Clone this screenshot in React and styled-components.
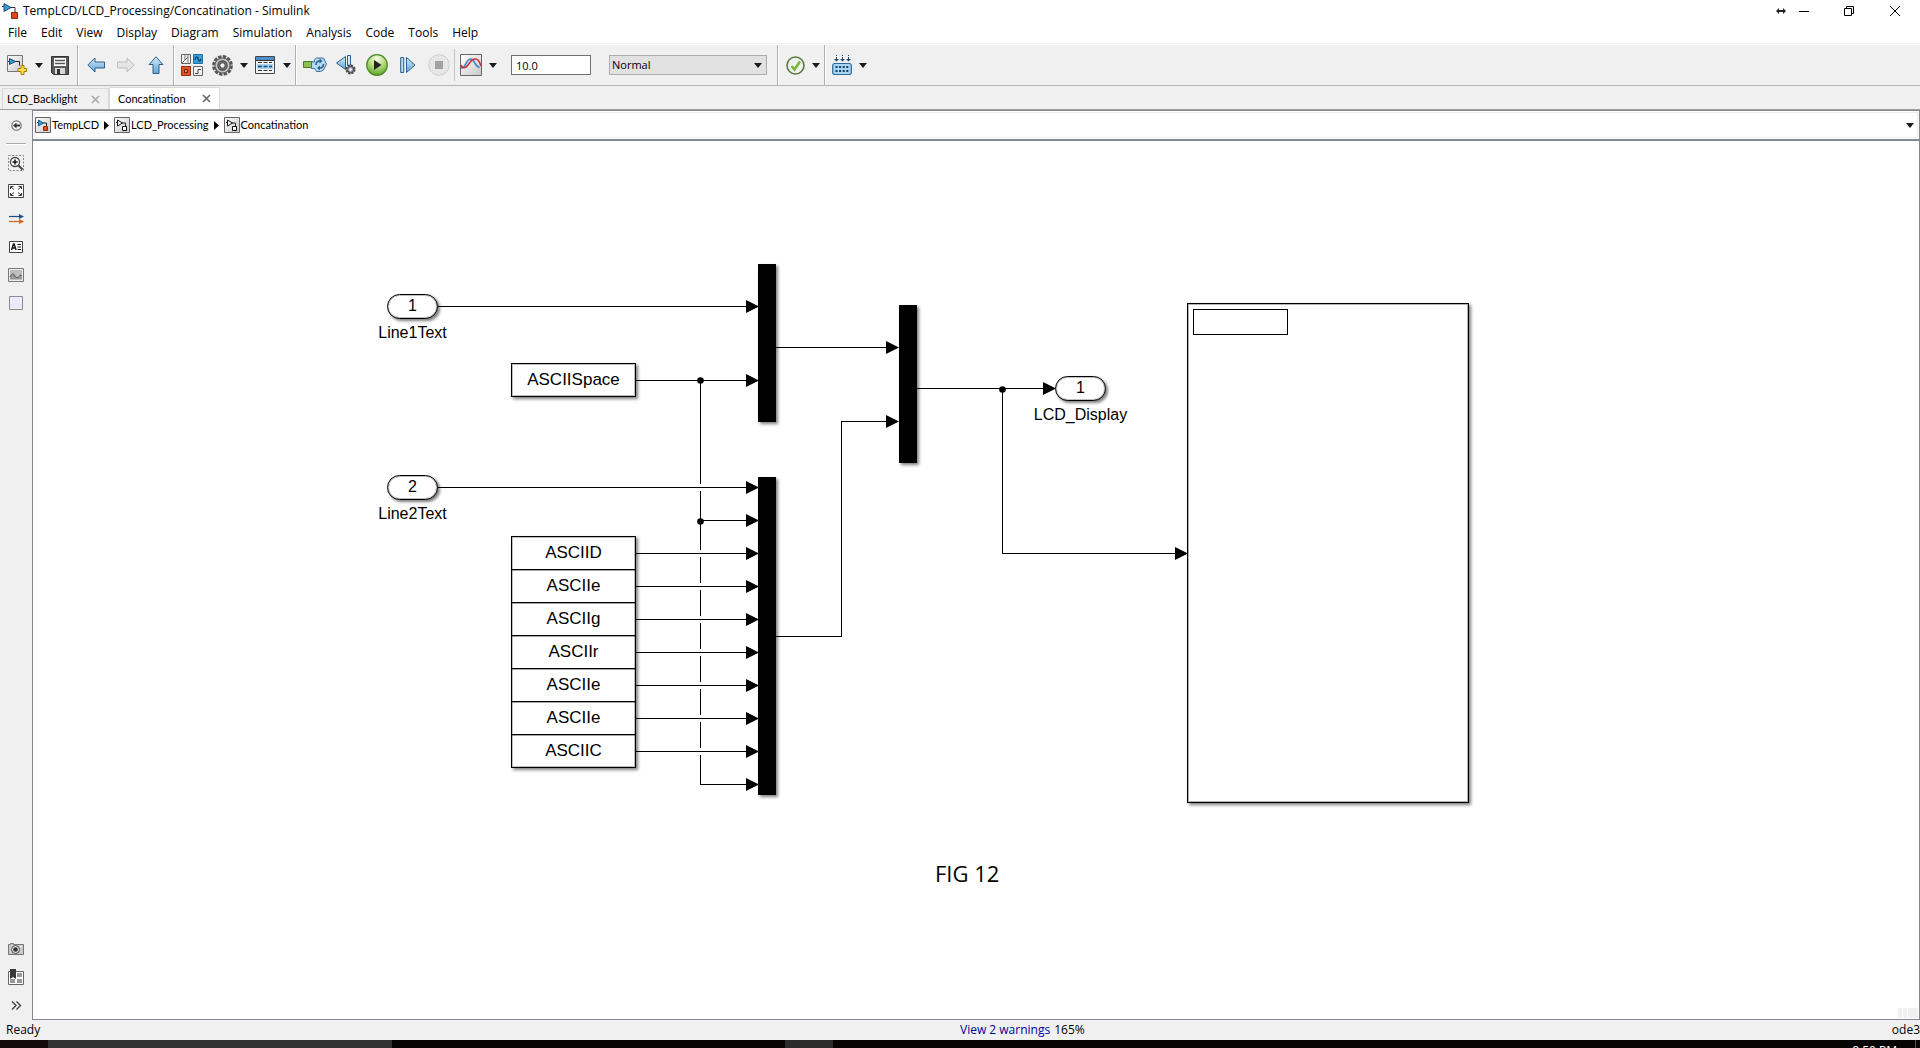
import React, { useState } from 'react';

import styled, { createGlobalStyle } from 'styled-components';

const GlobalStyle = createGlobalStyle`
  * {
    box-sizing: border-box;
  }
  body {
    margin: 0;
    overflow: hidden;
    background: #f0f0f0;
    color: #000;
    font-family: 'Open Sans', sans-serif;
    font-size: 12px;
    line-height: 16px;
  }
  button, input, select {
    font: inherit;
    color: inherit;
  }
  svg {
    display: block;
  }
`;

const Window = styled.div`
  display: flex;
  flex-direction: column;
  height: 100vh;
  white-space: nowrap;
`;

const PlainButton = styled.button`
  display: flex;
  align-items: center;
  justify-content: center;
  padding: 0;
  border: none;
  background: none;
`;

const TitleBar = styled.header`
  display: flex;
  align-items: center;
  height: 22px;
  padding-left: 2px;
  background: #fff;
`;

const Title = styled.h1`
  flex: 1;
  margin: 0 0 0 5px;
  font-size: 12px;
  font-weight: 400;
`;

const WindowButton = styled(PlainButton)`
  width: ${(props) => props.$w}px;
  height: 20px;
`;

const MinimizeButton = styled(WindowButton)`
  margin-right: 9px;
`;

const MenuBar = styled.nav`
  display: flex;
  height: 22px;
  padding-left: 1px;
  background: #fff;
  border-bottom: 1px solid #f0f0f0;
`;

const MenuItem = styled(PlainButton)`
  padding: 0 7px;
  height: 21px;
`;

const ToolBar = styled.div`
  display: flex;
  height: 42px;
  border-top: 1px solid #fff;
  border-bottom: 1px solid #b4b4b4;
`;

const ToolGroup = styled.div`
  display: flex;
  align-items: center;
  padding: 0 2px 0 3px;
  border-right: ${(props) => (props.$last ? 'none' : '1px solid #b0b0b0')};
  box-shadow: ${(props) => (props.$last ? 'none' : '1px 0 #fff')};

  &:first-child {
    padding-left: 2px;
  }
`;

const ToolButton = styled(PlainButton)`
  width: ${(props) => props.$w || 30}px;
  height: 30px;
`;

const ToolDivider = styled.div`
  width: 1px;
  height: 32px;
  background: #c4c4c4;
`;

const StopTime = styled.input`
  width: 80px;
  height: 20px;
  margin: 0 18px 0 12px;
  padding: 0 4px;
  border: 1px solid #707070;
  border-radius: 0;
  background: #fff;
  font-size: 11px;
`;

const ModeBox = styled.div`
  display: grid;
  align-items: center;
  width: 158px;
  margin-right: 8px;

  & > * {
    grid-area: 1 / 1;
  }
  svg {
    justify-self: end;
    margin-right: 5px;
    pointer-events: none;
  }
`;

const ModeSelect = styled.select`
  appearance: none;
  height: 20px;
  padding: 0 2px;
  border: 1px solid #adadad;
  border-radius: 0;
  background: #e1e1e1;
  font-size: 11px;
`;

const TabBar = styled.div`
  display: flex;
  align-items: flex-end;
  height: 23px;
  padding-left: 2px;
`;

const Tab = styled.div`
  display: flex;
  align-items: center;
  justify-content: space-between;
  width: ${(props) => (props.$active ? 111 : 107)}px;
  height: ${(props) => (props.$active ? 22 : 21)}px;
  padding: 0 6px 0 ${(props) => (props.$active ? 8 : 4)}px;
  border: 1px solid #d9d9d9;
  border-bottom: none;
  background: ${(props) => (props.$active ? '#fff' : '#f0f0f0')};
`;

const TabLabel = styled(PlainButton)`
  height: 20px;
  font-family: Lato, sans-serif;
  font-size: 11px;
`;

const TabClose = styled(PlainButton)`
  width: 14px;
  height: 14px;
`;

const Workspace = styled.div`
  display: flex;
  flex: 1;
  min-height: 0;
  border-top: 1px solid #a0a0a0;
`;

const Palette = styled.aside`
  display: flex;
  flex-direction: column;
  width: 32px;
  padding: 1px 0;
`;

const PaletteButton = styled(PlainButton)`
  width: 32px;
  height: 28px;
`;

const PaletteDivider = styled.div`
  height: 2px;
  margin: 4px 6px;
  border-top: 1px solid #a8a8a8;
  border-bottom: 1px solid #fff;
`;

const Spacer = styled.div`
  flex: 1;
`;

const Editor = styled.main`
  display: flex;
  flex-direction: column;
  flex: 1;
  min-width: 0;
  border: 1px solid #828790;
`;

const Breadcrumbs = styled.div`
  display: flex;
  align-items: center;
  height: 30px;
  border-bottom: 2px solid #828790;
  background: #fff;
`;

const CrumbTrail = styled.div`
  display: flex;
  flex: 1;
  align-items: center;
  height: 26px;
  margin: 1px;
  border: 1px solid #ececec;
`;

const Crumb = styled.a`
  display: flex;
  align-items: center;
  gap: 1px;
  color: #000;
  font-family: Lato, sans-serif;
  font-size: 11px;
  text-decoration: none;
`;

const CrumbArrow = styled.svg`
  margin: 0 5px;
`;

const CrumbMenu = styled(PlainButton)`
  width: 14px;
  height: 20px;
  margin-left: auto;
`;

const Canvas = styled.div`
  position: relative;
  flex: 1;
  overflow: hidden;
  background: #fff;
  font-family: 'Liberation Sans', Arial, sans-serif;
`;

const Wires = styled.svg`
  position: absolute;
  left: 0;
  top: 0;
  width: 100%;
  height: 100%;
`;

const Node = styled.div`
  position: absolute;
  left: ${(props) => props.$x}px;
  top: ${(props) => props.$y}px;
`;

const PortNode = styled(Node)`
  display: flex;
  flex-direction: column;
  align-items: center;
  width: 51px;
  font-size: 16px;
`;

const PortShape = styled.div`
  width: 51px;
  height: 25px;
  border: 1px solid #000;
  border-radius: 13px;
  box-shadow: 2px 2px 3px rgba(0, 0, 0, 0.5), inset 0 0 0 1px rgba(0, 0, 0, 0.25);
  background: #fff;
  line-height: 22px;
  text-align: center;
`;

const PortName = styled.div`
  margin-top: 4px;
  line-height: 20px;
`;

const Mux = styled(Node)`
  width: 18px;
  height: ${(props) => props.$h}px;
  background: #000;
  box-shadow: 2px 2px 3px rgba(0, 0, 0, 0.5);
`;

const ConstantStack = styled(Node)`
  width: 125px;
  border: 1px solid #000;
  box-shadow: 2px 2px 3px rgba(0, 0, 0, 0.5), inset 0 0 0 1px rgba(0, 0, 0, 0.25);
  font-size: 17px;
  line-height: 31px;
  text-align: center;
`;

const Constant = styled.div`
  height: 33px;
  border-bottom: 1px solid #000;
  box-shadow: 0 1px rgba(0, 0, 0, 0.35);

  &:last-child {
    height: 32px;
    border-bottom: none;
    box-shadow: none;
  }
`;

const Display = styled(Node)`
  width: 282px;
  height: 500px;
  padding: 5px;
  border: 1px solid #000;
  box-shadow: 2px 2px 3px rgba(0, 0, 0, 0.5), inset 0 0 0 1px rgba(0, 0, 0, 0.3);
`;

const DisplayValue = styled.div`
  width: 95px;
  height: 26px;
  border: 1px solid #000;
`;

const Caption = styled(Node)`
  font-family: 'Open Sans', sans-serif;
  font-size: 22px;
  line-height: 28px;
`;

const Grip = styled.div`
  position: absolute;
  right: 1px;
  bottom: 1px;
  display: flex;
  gap: 1px;
`;

const GripCell = styled.div`
  width: ${(props) => props.$w}px;
  height: 10px;
  background: #f0f0f0;
`;

const StatusBar = styled.footer`
  display: grid;
  grid-template-columns: 1fr 1fr;
  align-items: center;
  height: 20px;
`;

const StatusText = styled.div`
  padding-left: 6px;
`;

const StatusDetails = styled.div`
  display: flex;
  gap: 4px;
`;

const WarningLink = styled.a`
  color: #00009c;
  text-decoration: none;
`;

const Solver = styled.div`
  margin-left: auto;
`;

const TaskBar = styled.div`
  display: flex;
  height: 8px;
  overflow: hidden;
  background: #060504;
  color: #fff;
`;

const TaskSlot = styled.div`
  width: ${(props) => props.$w}px;
  background: ${(props) => props.$bg};
`;

const Clock = styled.div`
  margin: 3px 18px 0 auto;
`;

const DesktopEdge = styled.div`
  width: 5px;
  border-left: 1px solid #555;
`;

/* icons */

const Caret = () => (
  <svg width="8" height="5" viewBox="0 0 8 5">
    <path d="M0 0h8L4 5z" fill="#1a1a1a" />
  </svg>
);

const CloseIcon = ({ color }) => (
  <svg width="9" height="9" viewBox="0 0 9 9">
    <path d="M1 1l7 7M8 1l-7 7" stroke={color} strokeWidth="1.6" />
  </svg>
);

const AppIcon = () => (
  <svg width="16" height="16" viewBox="0 0 16 16">
    <path d="M0 3.500h2M8 4.500h5v5" stroke="#333" fill="none" />
    <path d="M2 0.500v8l7-4z" fill="#3f9bd8" stroke="#124a78" />
    <path d="M9.500 9.500h6v6h-6z" fill="#dd4a22" stroke="#8a2a10" />
  </svg>
);

const ModelIcon = ({ colored }) => (
  <svg width="16" height="16" viewBox="0 0 16 16">
    <defs>
      <linearGradient id="paper" x1="0" y1="0" x2="1" y2="1">
        <stop offset="0" stopColor="#fff" />
        <stop offset="1" stopColor="#c8c8c8" />
      </linearGradient>
    </defs>
    <path d="M.5.5h15v15H.5z" fill="url(#paper)" stroke="#666" />
    <path d="M2 5.500h2M8 6h3.500v3" stroke="#222" fill="none" />
    <path d="M3.500 3v6l5-3z" fill={colored ? '#3f9bd8' : '#fff'} stroke={colored ? '#1b5d90' : '#111'} />
    <path d="M8.500 9.500h4v4h-4z" fill={colored ? '#dd4a22' : '#fff'} stroke={colored ? '#9a3010' : '#111'} />
  </svg>
);

const NewIcon = () => (
  <svg width="20" height="20" viewBox="0 0 20 20">
    <path d="M.5.5h15v16H.5z" fill="url(#paper)" stroke="#777" />
    <path d="M1 6.500h2M8 6.500h4.500v4" stroke="#222" fill="none" />
    <path d="M2.500 3.500v6L8.500 6.500z" fill="#3f9bd8" stroke="#124a78" />
    <path d="M14.500 10.500h2.500v3h2.500v3h-2.500v3h-3v-3h-3v-3h3v-3z" fill="#ffe04a" stroke="#a67c00" />
  </svg>
);

const SaveIcon = () => (
  <svg width="18" height="19" viewBox="0 0 18 19">
    <path d="M.5.5h17v18H2.500l-2-2z" fill="#5a5a5a" stroke="#333" />
    <path d="M3 2h12v8H3z" fill="#fff" />
    <path d="M4 4.500h10M4 7.500h10" stroke="#555" strokeWidth="1.400" />
    <path d="M4 12h10v6H4z" fill="#d8d8d8" />
    <path d="M6 13h3v5H6z" fill="#333" />
  </svg>
);

const BlueGradient = () => (
  <linearGradient id="blue" x1="0" y1="0" x2="0" y2="1">
    <stop offset="0" stopColor="#d4ecfb" />
    <stop offset="1" stopColor="#5ea2d6" />
  </linearGradient>
);

const BackIcon = () => (
  <svg width="18" height="16" viewBox="0 0 18 16">
    <defs>
      <BlueGradient />
    </defs>
    <path d="M.8 8l7.200-7v4h9.500v6H8v4z" fill="url(#blue)" stroke="#2c5f8c" />
  </svg>
);

const ForwardIcon = () => (
  <svg width="18" height="16" viewBox="0 0 18 16">
    <path d="M17.200 8L10 1v4H.5v6H10v4z" fill="#e4e4e4" stroke="#bdbdbd" />
  </svg>
);

const UpIcon = () => (
  <svg width="16" height="18" viewBox="0 0 16 18">
    <path d="M8 .8l7 7.700h-4v9H5v-9H1z" fill="url(#blue)" stroke="#2c5f8c" />
  </svg>
);

const LibraryIcon = () => (
  <svg width="22" height="22" viewBox="0 0 22 22">
    <path d="M.5.5h9v9h-9z" fill="#f4f4f4" stroke="#666" />
    <path d="M1 9l3-3V1M4 6l3-3V1M7 3v6" stroke="#777" fill="none" />
    <path d="M12.500.5h9v9h-9z" fill="#35a3e0" stroke="#1b6fa5" />
    <path d="M14 6c1-4 2.500-4 3.200-1s2 3 2.800 0" stroke="#063f6b" strokeWidth="1.300" fill="none" />
    <path d="M.5 12.500h9v9h-9z" fill="#e0502a" stroke="#97300f" />
    <path d="M3.500 15.500h3v3h-3z" fill="#f38a66" stroke="#6e1d05" />
    <path d="M12.500 12.500h9v9h-9z" fill="#f4f4f4" stroke="#666" />
    <path d="M14 19.500h3v-4h3" stroke="#444" fill="none" />
  </svg>
);

const GearIcon = () => (
  <svg width="21" height="21" viewBox="0 0 20 20">
    <circle cx="10" cy="10" r="8.600" fill="none" stroke="#555" strokeWidth="2.600" strokeDasharray="3.300 1.200" />
    <circle cx="10" cy="10" r="7.200" fill="#c4c4c4" stroke="#5a5a5a" />
    <circle cx="10" cy="10" r="4.400" fill="#8c8c8c" stroke="#3a3a3a" />
    <circle cx="10" cy="10" r="2.600" fill="#f4f4f4" stroke="#444" />
  </svg>
);

const ExplorerIcon = () => (
  <svg width="20" height="18" viewBox="0 0 20 18">
    <path d="M.5.5h19v17H.5z" fill="#f4f4f4" stroke="#444" />
    <path d="M1 1h18v3H1z" fill="#4b8ec6" />
    <path d="M1 4.500h18" stroke="#333" />
    <path d="M2 8h16v5H2z" fill="#a9d2ee" />
    <path d="M3 6.500h4M8.500 6.500h4M14 6.500h3M3 14.500h4M8.500 14.500h4M14 14.500h3" stroke="#333" />
    <path d="M3 10.500h4M8.500 10.500h4M14 10.500h3" stroke="#124a78" strokeWidth="1.400" />
  </svg>
);

const UpdateIcon = () => (
  <svg width="24" height="18" viewBox="0 0 24 18">
    <path d="M.5 5.500h9v6h-9z" fill="#8cc152" stroke="#4b7a1f" />
    <path d="M8.500 6h3V3.500l2-1.500h7l3 6-3 6-3 1.500h-4l-2-3h-3z" fill="#b5d9f1" stroke="#3a73a3" />
    <path d="M13 9c0-3 1.500-4 4-4M20.500 8c0 3-1.500 4-4 4" stroke="#28618f" strokeWidth="1.600" fill="none" />
    <path d="M16.500 2.500l3 2.500-3 2.500zM17 9.500L14 12l3 2.500z" fill="#28618f" />
  </svg>
);

const StepBackIcon = () => (
  <svg width="20" height="20" viewBox="0 0 20 20">
    <path d="M9.500 1.500v13l-9-6.500z" fill="url(#blue)" stroke="#2c5f8c" />
    <path d="M11.500 .5h3v10h-3z" fill="#d4ecfb" stroke="#2c5f8c" />
    <circle cx="14.500" cy="14.500" r="4" fill="#aaa" stroke="#444" strokeWidth="2" strokeDasharray="2 1.140" />
    <circle cx="14.500" cy="14.500" r="3" fill="#aaa" stroke="#444" />
    <circle cx="14.500" cy="14.500" r="1.200" fill="#fff" />
  </svg>
);

const RunIcon = () => (
  <svg width="22" height="22" viewBox="0 0 22 22">
    <defs>
      <radialGradient id="green" cx=".5" cy=".2" r=".8">
        <stop offset="0" stopColor="#f4fbe8" />
        <stop offset=".5" stopColor="#b4dc7e" />
        <stop offset="1" stopColor="#5ea52a" />
      </radialGradient>
    </defs>
    <circle cx="11" cy="11" r="10.300" fill="url(#green)" stroke="#4b8a20" strokeWidth="1.200" />
    <path d="M8 6v10l7.500-5z" fill="#222" />
  </svg>
);

const StepIcon = () => (
  <svg width="16" height="18" viewBox="0 0 16 18">
    <path d="M.7 1.500h3v15h-3z" fill="#b9dcf3" stroke="#2c5f8c" />
    <path d="M6.500 1.500v15l8.500-7.500z" fill="url(#blue)" stroke="#2c5f8c" />
  </svg>
);

const StopIcon = () => (
  <svg width="22" height="22" viewBox="0 0 22 22">
    <circle cx="11" cy="11" r="10.300" fill="#e6e6e6" stroke="#cfcfcf" />
    <path d="M7 7h8v8H7z" fill="#a2a2a2" />
  </svg>
);

const ScopeIcon = () => (
  <svg width="22" height="22" viewBox="0 0 22 22">
    <path d="M.5.500h21v21H.5z" fill="url(#paper)" stroke="#666" />
    <path d="M1 14c5 0 5-9 9.500-9s4 8 9 8.500" stroke="#3f86c4" strokeWidth="1.600" fill="none" />
    <path d="M1 11c1.500 4 4.500 3.500 7 0s4-6.500 8-6c3 .5 4 4 5 7" stroke="#c8323c" strokeWidth="1.600" fill="none" />
  </svg>
);

const CheckIcon = () => (
  <svg width="19" height="19" viewBox="0 0 19 19">
    <circle cx="9.500" cy="9.500" r="8.500" fill="#f0f0f0" stroke="#5b7a3a" strokeWidth="1.600" />
    <path d="M5.500 10l3 3.500 5.500-8" stroke="#7db53a" strokeWidth="2.600" fill="none" />
  </svg>
);

const BuildIcon = () => (
  <svg width="20" height="20" viewBox="0 0 20 20">
    <path d="M4.500 0v1M4.500 2v3M10.500 0v1M10.500 2v3M16.500 0v1M16.500 2v3" stroke="#1c4a75" />
    <path d="M2 4h5L4.500 6.500zM8 4h5l-2.500 2.500zM14 4h5l-2.500 2.500z" fill="#1c4a75" />
    <rect x=".7" y="8.500" width="18.600" height="11" rx="2" fill="#a9d5f3" stroke="#2f6a9c" strokeWidth="1.200" />
    <path d="M3.500 12h14M3.500 16h14" stroke="#123f66" strokeWidth="2" strokeDasharray="2 1.600" />
  </svg>
);

const HideIcon = () => (
  <svg width="11" height="11" viewBox="0 0 11 11">
    <circle cx="5.500" cy="5.500" r="4.700" fill="#fafafa" stroke="#777" strokeWidth="1.200" />
    <path d="M2 5.500L5.500 2.500V4.500H9v2H5.500v2z" fill="#333" />
  </svg>
);

const ZoomIcon = () => (
  <svg width="16" height="16" viewBox="0 0 16 16">
    <path d="M.5.500h15v15H.5z" fill="none" stroke="#888" strokeDasharray="2 1.500" />
    <circle cx="7" cy="7" r="4.500" fill="#fff" stroke="#444" strokeWidth="1.300" />
    <path d="M4.500 7h5M7 4.500v5" stroke="#111" strokeWidth="1.500" />
    <path d="M10.500 10.500l4 4" stroke="#444" strokeWidth="2.200" />
  </svg>
);

const FitIcon = () => (
  <svg width="16" height="14" viewBox="0 0 16 14">
    <path d="M.5.500h15v13H.5z" fill="#fff" stroke="#444" />
    <path d="M2.500 5V2.500H5.500M10.500 2.500h3V5M13.500 9v2.500h-3M5.500 11.500h-3V9M3 3l3 2.500M13 3l-3 2.500M3 11l3-2.500M13 11l-3-2.500" stroke="#333" fill="none" />
  </svg>
);

const SignalIcon = () => (
  <svg width="15" height="10" viewBox="0 0 15 10">
    <path d="M0 2.500h11" stroke="#1f4e80" strokeWidth="1.200" />
    <path d="M10 0l5 2.500L10 5z" fill="#1f4e80" />
    <path d="M0 7.500h11" stroke="#d8641e" strokeWidth="1.200" />
    <path d="M10 5l5 2.500-5 2.500z" fill="#d8641e" />
  </svg>
);

const AnnotationIcon = () => (
  <svg width="14" height="12" viewBox="0 0 14 12">
    <path d="M.5.500h13v11H.5z" fill="#fff" stroke="#444" />
    <path d="M2.500 9l2-6h.6l2 6M3.300 7h3" stroke="#111" strokeWidth="1.400" fill="none" />
    <path d="M8.500 3.500h3.500M8.500 6h3.500M8.500 8.500h3.500" stroke="#111" />
  </svg>
);

const ImageIcon = () => (
  <svg width="16" height="14" viewBox="0 0 16 14">
    <path d="M.5.500h15v13H.5z" fill="#eee" stroke="#777" />
    <path d="M2 2h12v10H2z" fill="#bdbdbd" />
    <path d="M2 9c2-4 3.500-4 5-1s3.500 1.500 4.500 0 1.500-1 2.500 0v3H2z" fill="#9a9a9a" />
    <path d="M2 9c2-4 3.500-4 5-1s3.500 1.500 4.500 0 1.500-1 2.500 0" fill="none" stroke="#555" />
  </svg>
);

const AreaIcon = () => (
  <svg width="14" height="14" viewBox="0 0 14 14">
    <path d="M.5.500h13v13H.5z" fill="#eaeafa" stroke="#8c8c94" />
  </svg>
);

const CameraIcon = () => (
  <svg width="16" height="12" viewBox="0 0 16 12">
    <path d="M.5 1.500h2V.500h3v1h10v10H.5z" fill="#c9c9c9" stroke="#777" />
    <circle cx="7.500" cy="6.500" r="4" fill="#ddd" stroke="#555" />
    <circle cx="7.500" cy="6.500" r="2.300" fill="#333" />
    <path d="M12 3.500h2" stroke="#fff" />
  </svg>
);

const BrowserIcon = () => (
  <svg width="16" height="16" viewBox="0 0 16 16">
    <path d="M.5 2.500h15v13H.5z" fill="#fff" stroke="#666" />
    <path d="M2 10h5v4H2zM9 10h5v4H9zM9 4h5v4H9z" fill="#9a9a9a" />
    <path d="M2 0h6v10L5 8l-3 2z" fill="#3a3a3a" />
  </svg>
);

const MoreIcon = () => (
  <svg width="11" height="9" viewBox="0 0 11 9">
    <path d="M1 .5l4 4-4 4M5.500.500l4 4-4 4" stroke="#444" strokeWidth="1.400" fill="none" />
  </svg>
);

const MENUS = ['File', 'Edit', 'View', 'Display', 'Diagram', 'Simulation', 'Analysis', 'Code', 'Tools', 'Help'];

const CONSTANTS = ['ASCIID', 'ASCIIe', 'ASCIIg', 'ASCIIr', 'ASCIIe', 'ASCIIe', 'ASCIIC'];

const ROWS = [412, 445, 478, 511, 544, 577, 610];

// tip of every arrow head
const ARROWS = [
  [726, 165], [726, 239], [726, 346], [726, 379], [726, 643],
  ...ROWS.map((y) => [726, y]),
  [866, 206], [866, 280], [1023, 247], [1155, 412],
];

const PALETTE = [
  ['Zoom', ZoomIcon],
  ['Fit to view', FitIcon],
  ['Sample time', SignalIcon],
  ['Annotation', AnnotationIcon],
  ['Image', ImageIcon],
  ['Area', AreaIcon],
];

const PALETTE_BOTTOM = [
  ['Screenshot', CameraIcon],
  ['Model browser', BrowserIcon],
  ['More', MoreIcon],
];

function Port({ x, y, number, name }) {
  return (
    <PortNode $x={x} $y={y}>
      <PortShape>{number}</PortShape>
      <PortName>{name}</PortName>
    </PortNode>
  );
}

function Diagram() {
  return (
    <Canvas>
      <Wires>
        <g stroke="#000" fill="none" shapeRendering="crispEdges">
          <path d="M405 165.500h310M603 239.500h112M405 346.500h310M667 379.500h48" />
          {ROWS.map((y) => (
            <path key={y} d={`M603 ${y}.5h112`} />
          ))}
          <path d="M667.500 239v104M667.500 350v59" />
          {ROWS.map((y, i) => (
            <path key={y} d={`M667.500 ${y + 4}V${i === ROWS.length - 1 ? 644 : y + 30}`} />
          ))}
          <path d="M667 643.500h48M743 206.500h112M743 495.500h65.500V280.500H855" />
          <path d="M884 247.500h127M969.500 247v165.500H1143" />
        </g>
        {ARROWS.map(([x, y]) => (
          <path key={`${x}-${y}`} d={`M${x} ${y + 0.5}l-13-6.500v13z`} />
        ))}
        <circle cx="667.500" cy="239.500" r="3.300" />
        <circle cx="667.500" cy="380.500" r="3.300" />
        <circle cx="969.500" cy="248.500" r="3.300" />
      </Wires>
      <Port x={354} y={153} number="1" name="Line1Text" />
      <Port x={354} y={334} number="2" name="Line2Text" />
      <Port x={1022} y={235} number="1" name="LCD_Display" />
      <ConstantStack $x={478} $y={222}>
        <Constant>ASCIISpace</Constant>
      </ConstantStack>
      <ConstantStack $x={478} $y={395}>
        {CONSTANTS.map((name, i) => (
          <Constant key={i}>{name}</Constant>
        ))}
      </ConstantStack>
      <Mux $x={725} $y={123} $h={158} />
      <Mux $x={725} $y={336} $h={318} />
      <Mux $x={866} $y={164} $h={158} />
      <Display $x={1154} $y={162}>
        <DisplayValue />
      </Display>
      <Caption $x={902} $y={718}>FIG 12</Caption>
      <Grip>
        <GripCell $w={4} />
        <GripCell $w={4} />
        <GripCell $w={10} />
      </Grip>
    </Canvas>
  );
}

export default function App() {
  const [stopTime, setStopTime] = useState('10.0');
  const [mode, setMode] = useState('Normal');

  return (
    <Window>
      <GlobalStyle />
      <TitleBar>
        <AppIcon />
        <Title>TempLCD/LCD_Processing/Concatination - Simulink</Title>
        <WindowButton $w={16} aria-label="Resize">
          <svg width="10" height="6" viewBox="0 0 10 6">
            <path d="M0 3l3-3v2h4V0l3 3-3 3V4H3v2z" fill="#222" />
          </svg>
        </WindowButton>
        <MinimizeButton $w={30} aria-label="Minimize">
          <svg width="10" height="1"><path d="M0 .5h10" stroke="#000" /></svg>
        </MinimizeButton>
        <WindowButton $w={42} aria-label="Restore">
          <svg width="10" height="10" viewBox="0 0 10 10">
            <path d="M.5 2.500h7v7h-7zM2.500 2.500v-2h7v7h-2" fill="none" stroke="#000" />
          </svg>
        </WindowButton>
        <WindowButton $w={50} aria-label="Close">
          <svg width="10" height="10" viewBox="0 0 10 10">
            <path d="M0 0l10 10M10 0L0 10" stroke="#000" />
          </svg>
        </WindowButton>
      </TitleBar>
      <MenuBar>
        {MENUS.map((name) => (
          <MenuItem key={name}>{name}</MenuItem>
        ))}
      </MenuBar>
      <ToolBar>
        <ToolGroup>
          <ToolButton aria-label="New"><NewIcon /></ToolButton>
          <ToolButton $w={13} aria-label="New options"><Caret /></ToolButton>
          <ToolButton aria-label="Save"><SaveIcon /></ToolButton>
        </ToolGroup>
        <ToolGroup>
          <ToolButton aria-label="Back"><BackIcon /></ToolButton>
          <ToolButton aria-label="Forward"><ForwardIcon /></ToolButton>
          <ToolButton aria-label="Up"><UpIcon /></ToolButton>
        </ToolGroup>
        <ToolGroup>
          <ToolButton aria-label="Library browser"><LibraryIcon /></ToolButton>
          <ToolButton aria-label="Configuration"><GearIcon /></ToolButton>
          <ToolButton $w={13} aria-label="Configuration options"><Caret /></ToolButton>
          <ToolButton aria-label="Model explorer"><ExplorerIcon /></ToolButton>
          <ToolButton $w={13} aria-label="Explorer options"><Caret /></ToolButton>
        </ToolGroup>
        <ToolGroup>
          <ToolButton $w={31} aria-label="Update"><UpdateIcon /></ToolButton>
          <ToolButton $w={31} aria-label="Step back"><StepBackIcon /></ToolButton>
          <ToolButton $w={31} aria-label="Run"><RunIcon /></ToolButton>
          <ToolButton $w={31} aria-label="Step forward"><StepIcon /></ToolButton>
          <ToolButton $w={31} aria-label="Stop"><StopIcon /></ToolButton>
          <ToolDivider />
          <ToolButton $w={31} aria-label="Data inspector"><ScopeIcon /></ToolButton>
          <ToolButton $w={13} aria-label="Inspector options"><Caret /></ToolButton>
          <StopTime aria-label="Stop time" value={stopTime} onChange={(e) => setStopTime(e.target.value)} />
          <ModeBox>
            <ModeSelect aria-label="Simulation mode" value={mode} onChange={(e) => setMode(e.target.value)}>
              <option>Normal</option>
            </ModeSelect>
            <Caret />
          </ModeBox>
        </ToolGroup>
        <ToolGroup>
          <ToolButton $w={28} aria-label="Advisor"><CheckIcon /></ToolButton>
          <ToolButton $w={13} aria-label="Advisor options"><Caret /></ToolButton>
        </ToolGroup>
        <ToolGroup $last>
          <ToolButton $w={28} aria-label="Build"><BuildIcon /></ToolButton>
          <ToolButton $w={13} aria-label="Build options"><Caret /></ToolButton>
        </ToolGroup>
      </ToolBar>
      <TabBar>
        <Tab>
          <TabLabel>LCD_Backlight</TabLabel>
          <TabClose aria-label="Close LCD_Backlight"><CloseIcon color="#aaa" /></TabClose>
        </Tab>
        <Tab $active>
          <TabLabel>Concatination</TabLabel>
          <TabClose aria-label="Close Concatination"><CloseIcon color="#666" /></TabClose>
        </Tab>
      </TabBar>
      <Workspace>
        <Palette>
          <PaletteButton aria-label="Hide browser"><HideIcon /></PaletteButton>
          <PaletteDivider />
          {PALETTE.map(([label, Icon]) => (
            <PaletteButton key={label} aria-label={label}><Icon /></PaletteButton>
          ))}
          <Spacer />
          {PALETTE_BOTTOM.map(([label, Icon]) => (
            <PaletteButton key={label} aria-label={label}><Icon /></PaletteButton>
          ))}
        </Palette>
        <Editor>
          <Breadcrumbs>
            <CrumbTrail>
              <Crumb href="#"><ModelIcon colored />TempLCD</Crumb>
              <CrumbArrow width="5" height="9"><path d="M0 0v9l5-4.500z" /></CrumbArrow>
              <Crumb href="#"><ModelIcon />LCD_Processing</Crumb>
              <CrumbArrow width="5" height="9"><path d="M0 0v9l5-4.500z" /></CrumbArrow>
              <Crumb href="#"><ModelIcon />Concatination</Crumb>
              <CrumbMenu aria-label="History"><Caret /></CrumbMenu>
            </CrumbTrail>
          </Breadcrumbs>
          <Diagram />
        </Editor>
      </Workspace>
      <StatusBar>
        <StatusText>Ready</StatusText>
        <StatusDetails>
          <WarningLink href="#">View 2 warnings</WarningLink>
          <span>165%</span>
          <Solver>ode3</Solver>
        </StatusDetails>
      </StatusBar>
      <TaskBar>
        <TaskSlot $w={48} $bg="#140a0a" />
        <TaskSlot $w={344} $bg="#323232" />
        <TaskSlot $w={393} $bg="#060504" />
        <TaskSlot $w={48} $bg="#2c2c2c" />
        <Clock>8:50 PM</Clock>
        <DesktopEdge />
      </TaskBar>
    </Window>
  );
}
